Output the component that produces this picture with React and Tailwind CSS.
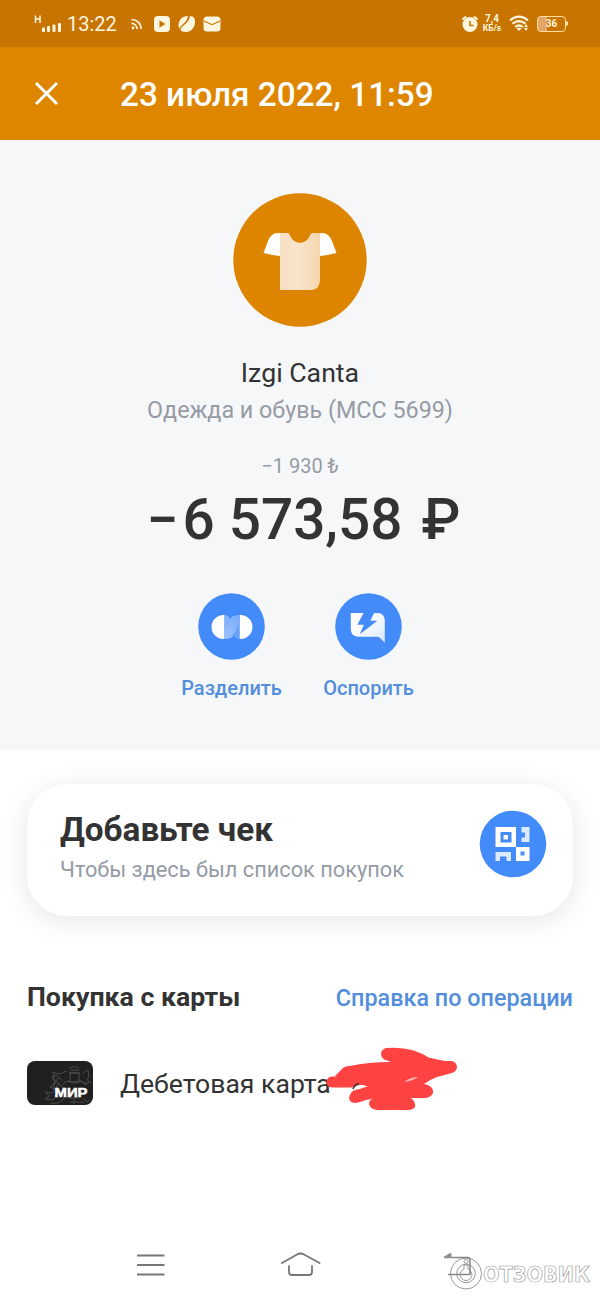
import React from "react";

function StatusBar() {
  return (
    <div className="flex h-[47px] items-center bg-[#c77400] pl-[34px] pr-[32px] text-[#fff6df]">
      <svg width="28" height="24" viewBox="0 0 28 24" fill="currentColor">
        <path d="M1.500 3.500v7.500M6 3.500v7.500M1.500 7H6" stroke="currentColor" strokeWidth="1.500" fill="none" />
        <rect x="8" y="15.500" width="3" height="4.500" rx="1" />
        <rect x="13" y="14" width="3" height="6" rx="1" />
        <rect x="18.500" y="12.500" width="3" height="7.500" rx="1" />
        <rect x="24" y="11" width="3" height="9" rx="1" />
      </svg>
      <span className="ml-[5px] mt-[1px] w-[52px] whitespace-nowrap text-[20px] leading-6">13:22</span>
      <svg className="ml-[11px]" width="13" height="14" viewBox="0 0 13 14" fill="none" stroke="currentColor" strokeWidth="1.700">
        <circle cx="3" cy="11" r="1.400" fill="currentColor" stroke="none" />
        <path d="M1.500 6.300a5.500 5.500 0 0 1 5.500 5.700M1.500 2.500a9.200 9.200 0 0 1 9.500 9.500" />
      </svg>
      <svg className="ml-[11px]" width="16" height="16" viewBox="0 0 16 16">
        <rect width="16" height="16" rx="4" fill="currentColor" />
        <path d="M5.500 4.300v7.400l6-3.700z" fill="#c77400" />
      </svg>
      <svg className="ml-[8px]" width="18" height="18" viewBox="0 0 18 18">
        <path d="M.5 11C.5 5 4 1 10 1Q9 6 5 9Q2.500 11 1.500 14Z" fill="currentColor" />
        <path d="M12 1c4 0 5.500 3 5 7-.6 5-4 9-9 9-3 0-5-1-5.500-2 1-5 8-6 9.500-14Z" fill="currentColor" />
      </svg>
      <svg className="ml-[7px]" width="18" height="16" viewBox="0 0 18 16">
        <rect x=".5" y=".5" width="17" height="15" rx="3.500" fill="currentColor" />
        <path d="M1 5l8 3.700L17 5" fill="none" stroke="#c77400" strokeWidth="1.200" />
      </svg>
      <svg className="ml-auto" width="18" height="18" viewBox="0 0 18 18">
        <circle cx="8" cy="9.500" r="7.500" fill="currentColor" />
        <path d="M1 4l2.500-2M15 4l-2.500-2" stroke="currentColor" strokeWidth="2" strokeLinecap="round" />
        <path d="M8 6v4.500h3.500" fill="none" stroke="#c77400" strokeWidth="1.500" />
      </svg>
      <div className="ml-[2px] w-[20px] whitespace-nowrap text-center text-[10px] font-bold leading-[9px]">7,4<br /><span className="text-[8.5px]">КБ/s</span></div>
      <svg className="ml-[7px]" width="21" height="17" viewBox="0 0 21 17" fill="none" stroke="currentColor" strokeWidth="2.200">
        <path d="M1 5.300Q10 -2 19 5.300M3.500 8.700Q10 3.500 16.500 8.700M6.200 12Q10 9 13.800 12" />
        <path d="M7.500 13.500Q10 12 12.500 13.500L10 16Z" fill="currentColor" stroke="none" />
        <path d="M15 12l2-3 2 3zM15 13l2 3 2-3z" fill="currentColor" stroke="none" />
      </svg>
      <div className="ml-[7px] flex items-center">
        <div className="flex h-[16px] w-[29px] items-center justify-center rounded-[4px] border-[1.5px] border-[#ffe0a5] bg-linear-to-r from-[#e8a467] from-35% to-transparent to-35% text-[10px] font-bold leading-none">36</div>
        <div className="h-[5px] w-[2px] rounded-r bg-[#ffe0a5]" />
      </div>
    </div>
  );
}

function ShirtIcon() {
  return (
    <svg width="134" height="134" viewBox="0 0 134 134">
      <defs>
        <linearGradient id="shirt"><stop stopColor="#f7dfc2" /><stop offset=".45" stopColor="#f8e4cc" /><stop offset="1" stopColor="#f5d6ad" /></linearGradient>
      </defs>
      <circle cx="67" cy="67" r="66.700" fill="#dd8500" />
      <path d="M47 40h-2c-5 0-8 3-10 8l-4.500 12q8 2 16.500 3zM87 40h2c5 0 8 3 10 8l4.500 12q-8 2-16.500 3z" fill="#fff" />
      <path d="M47 40h7c2 0 2.500 1 3.300 3 3.800 9 15.600 9 19.400 0 .8-2 1.300-3 3.300-3h7v47q0 10-10 10H47z" fill="url(#shirt)" />
    </svg>
  );
}

function SplitIcon() {
  return (
    <svg width="68" height="68" viewBox="0 0 68 68">
      <defs><linearGradient id="fold" x1="0" y1="1" x2="1" y2="0"><stop stopColor="#9fc4fd" /><stop offset="1" stopColor="#75a9fa" /></linearGradient></defs>
      <circle cx="33.500" cy="33.500" r="33.300" fill="#428bf9" />
      <path d="M26.500 22v24h-1a12 12 0 0 1 0-24zM41.500 22h1a12 12 0 0 1 0 24h-1z" fill="#fff" />
      <path d="M26.500 22c4 0 7.500 4 7.500 12s-3.500 12-7.500 12z" fill="#83b2fb" />
      <path d="M41.500 22v24c-4 0-7.500-4-7.500-12s3.500-12 7.500-12z" fill="#6aa2fa" />
      <path d="M26.500 46V39l7-15q3-2 8-2v7l-7 15q-3 2-8 2z" fill="url(#fold)" />
    </svg>
  );
}

function DisputeIcon() {
  return (
    <svg width="68" height="68" viewBox="0 0 68 68">
      <defs><linearGradient id="bubble" x1="0" y1="0" x2="1" y2="1"><stop offset=".35" stopColor="#fff" /><stop offset="1" stopColor="#d7e7ff" /></linearGradient></defs>
      <circle cx="33.500" cy="33.500" r="33.300" fill="#428bf9" />
      <g transform="translate(-.7 -.3)">
        <path d="M16.500 20.300H43c5 0 7.500 3 7.500 8V50l-5-5q-1-1-3-1h-18c-5 0-8-3-8-8z" fill="url(#bubble)" />
        <path d="M30.500 18L23 32h6.500l-4 9.500L43 28h-7l5-10z" fill="#428bf9" />
      </g>
    </svg>
  );
}

function QrIcon() {
  return (
    <svg width="68" height="68" viewBox="0 0 68 68">
      <circle cx="34" cy="34" r="33.300" fill="#428bf9" />
      <path fillRule="evenodd" fill="#fff" d="M16.500 17H37v20H16.500zm5 5v10.500h11V22zM37 37h13.500v14H37zm4.500 4.500v4h4v-4z" />
      <path fill="#fff" d="M24.500 25H29v4.500h-4.500z" />
      <path fill="#dceaff" d="M42.500 17h8v15h-8v-4.500H46v-5h-3.500zM16.500 42H32v9h-4.500v-4.500H21V51h-4.500z" />
    </svg>
  );
}

function BankCard() {
  return (
    <div className="relative h-[44px] w-[66px] overflow-hidden rounded-[8px] bg-[#202020]">
      <svg className="absolute inset-0" width="66" height="44" viewBox="0 0 66 44" fill="none" stroke="#575757" strokeWidth=".8">
        <path d="M42 7q5-3 10 0M43 9h9M43 20v-8h9v8M42 12h11M41 20q7 4 13 0M36 27l-9-9-1-7 6 2 8-3M36 20l-7-6-4 2 3 6-5 4 5 2-3 4-7-1 5 4-5 3 8 1 3-4M56 12l5-3 1 6-2 4 4 3M53 20l6 3 3-3M34 25q5-7 13-4 7-3 13 3M27 35l6-4M24 42q9 2 13-5M42 37h10M43 41h14M47 37v6M56 37l4 4 3-2M27 29q-1-8 5-12M30 32q-2-7 3-11" />
      </svg>
      <svg className="absolute left-[27px] top-[24px]" width="35" height="16" viewBox="0 0 35 16" fontFamily="Liberation Sans, sans-serif" fontSize="13" fontWeight="700">
        <text x=".5" y="11.500" textLength="33" lengthAdjust="spacingAndGlyphs" fill="#fff" stroke="#fff" strokeWidth=".5">МИР</text>
      </svg>
    </div>
  );
}

function Scribble() {
  return (
    <svg className="absolute -right-[130px] -top-[22px]" width="136" height="68" viewBox="0 0 136 68">
      <path d="M62 8Q85 6 101 17L118 21H126" fill="none" stroke="#ff4242" strokeWidth="12" strokeLinecap="round" strokeLinejoin="round" />
      <path d="M7 36H26L31 31" fill="none" stroke="#ff4242" strokeWidth="11" strokeLinecap="round" strokeLinejoin="round" />
      <path fill="#ff4242" d="M10 30L17 23Q19 20 25 20Q43 16 66 16L58 13L100 12L120 15L127 27L112 31Q104 34 99 38Q109 40 108 47Q106 52 99 52H86Q91 56 90 61Q88 64 83 64H52Q45 63 44 58Q44 54 48 53Q42 53 35 56Q25 59 24 52Q25 46 30 44Q36 43 43 40L28 40L22 35Z" />
      <path d="M27 44q2-4 7-5l7 0-8 3z" fill="#fff" />
      <path d="M28 43q2-5 6-5" fill="none" stroke="#333" strokeWidth="1.500" />
      <path d="M79 36q9-1 14-5-7 0-14 5z" fill="#ffb9b9" />
    </svg>
  );
}

function SystemNavigation() {
  return (
    <nav className="mt-auto flex h-[70px] items-start pt-[18px]">
      <svg className="ml-[136px]" width="30" height="32" viewBox="0 0 30 32" stroke="#777" strokeWidth="1.800"><path d="M1 7.500h27.500M1 17h27.500M1 26.500h27.500" /></svg>
      <svg className="ml-[114px]" width="42" height="34" viewBox="0 0 42 34" fill="none" stroke="#777" strokeWidth="1.800" strokeLinecap="round" strokeLinejoin="round"><path d="M2 15L17 6.500q4-2 7 0L39.500 15M9 18v6q0 3 3 3h17q3 0 3-3v-6" /></svg>
      <div className="ml-[119px] flex w-[158px]">
        <svg className="shrink-0" width="42" height="45" viewBox="0 0 42 45" fill="none" stroke="#999" strokeWidth="1">
          <circle cx="25" cy="25.500" r="15.500" />
          <circle cx="25" cy="25.500" r="9.300" />
          <circle cx="25" cy="13.500" r="2" fill="#fff" />
          <path d="M23 17h4v4q4 2 4 5.500a6 6 0 0 1-12 0q0-3.500 4-5.500z" fill="#fff" />
          <path d="M3 9.500h24q2 0 2 3V22M7 26.500h22V22" stroke="#888" strokeWidth="1.600" />
          <path d="M3 9l7-4v4z" fill="#888" />
        </svg>
        <svg className="-ml-[1px] mt-[10px] shrink-0" width="114" height="34" viewBox="0 0 114 34" fontFamily="DejaVu Sans, sans-serif" fontSize="21.5" fontWeight="700">
          <text x="1" y="24" textLength="107" lengthAdjust="spacingAndGlyphs" fill="#fff" stroke="#999" strokeWidth=".7">ОТЗОВИК</text>
        </svg>
      </div>
    </nav>
  );
}

export default function App() {
  return (
    <div className="flex h-[1300px] w-[600px] flex-col overflow-hidden bg-white font-['Roboto',sans-serif] text-[#333]">
      <StatusBar />
      <header className="flex h-[93px] items-center bg-[#df8600] pl-[34px] text-white">
        <svg width="26" height="26" viewBox="0 0 26 26" stroke="currentColor" strokeWidth="3"><path d="M2 2l21 21M23 2L2 23" /></svg>
        <h1 className="ml-[60px] mt-[2px] whitespace-nowrap text-[33.3px] font-medium leading-10">23 июля 2022, 11:59</h1>
      </header>
      <section className="flex h-[610px] flex-col items-center bg-[#f6f7f9] pt-[53px]">
        <ShirtIcon />
        <h2 className="mt-[29px] text-[26.7px] leading-[34px]">Izgi Canta</h2>
        <p className="mt-[5px] text-[23.3px] leading-[30px] text-[#959ba5]">Одежда и обувь (MCC 5699)</p>
        <p className="mt-[28px] text-[20px] leading-[26px] text-[#959ba5]">−1 930 ₺</p>
        <p className="mt-[4px] whitespace-nowrap pl-[7px] text-[56.7px] font-medium leading-[74px]"><span className="mr-[4px]">−</span>6 573,58<span className="ml-[5px]"> ₽</span></p>
        <div className="mt-[36px] flex w-[274px] justify-between text-[20px] font-medium leading-6 text-[#528edb]">
          <button className="flex w-[137px] flex-col items-center"><SplitIcon /><span className="mt-[15px]">Разделить</span></button>
          <button className="flex w-[137px] flex-col items-center"><DisputeIcon /><span className="mt-[15px]">Оспорить</span></button>
        </div>
      </section>
      <section className="mx-[27px] mt-[34px] flex h-[132px] items-center justify-between rounded-[40px] bg-white pl-[33px] pr-[26px] shadow-[0_5px_28px_rgba(0,0,0,0.10)]">
        <div className="mb-[7px]">
          <h2 className="whitespace-nowrap text-[33.3px] font-bold leading-[40px]">Добавьте чек</h2>
          <p className="mt-[6px] whitespace-nowrap text-[21.75px] leading-[28px] text-[#959ba5]">Чтобы здесь был список покупок</p>
        </div>
        <div className="mb-[12px]"><QrIcon /></div>
      </section>
      <div className="mx-[27px] mt-[64px] flex h-[36px] items-center justify-between whitespace-nowrap">
        <h3 className="mb-[2px] text-[26.7px] font-bold">Покупка с карты</h3>
        <a className="mt-[1px] text-[23.4px] font-medium text-[#528edb]">Справка по операции</a>
      </div>
      <div className="ml-[27px] mt-[45px] flex items-center">
        <BankCard />
        <div className="relative ml-[27px] mt-[2px] text-[26.6px] leading-8"><span className="whitespace-nowrap">Дебетовая карта</span><Scribble /></div>
      </div>
      <SystemNavigation />
    </div>
  );
}
